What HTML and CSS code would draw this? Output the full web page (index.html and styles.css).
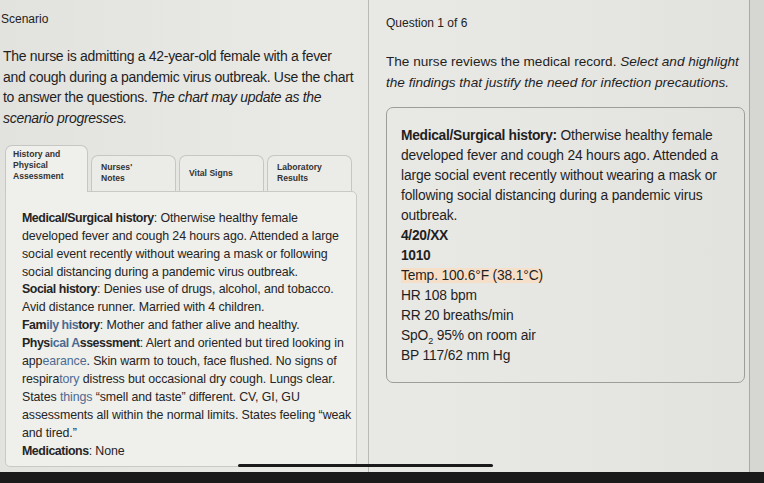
FILE: index.html
```html
<!DOCTYPE html>
<html>
<head>
<meta charset="utf-8">
<link rel="stylesheet" href="styles.css">
</head>
<body>
<div class="page">
  <section class="left">
    <div class="title">Scenario</div>
    <p class="intro">The nurse is admitting a 42-year-old female with a fever and cough during a pandemic virus outbreak. Use the chart to answer the questions. <em>The chart may update as the scenario progresses.</em></p>
    <div class="tabs">
      <div class="tab active">History and<br>Physical<br>Assessment</div>
      <div class="tab">Nurses'<br>Notes</div>
      <div class="tab">Vital Signs</div>
      <div class="tab">Laboratory<br>Results</div>
    </div>
    <div class="panel">
      <p><b>Medical/Surgical history</b>: Otherwise healthy female developed fever and cough 24 hours ago. Attended a large social event recently without wearing a mask or following social distancing during a pandemic virus outbreak.<br>
      <b>Social history</b>: Denies use of drugs, alcohol, and tobacco. Avid distance runner. Married with 4 children.<br>
      <b>Fam<span class="tint">ily his</span>tory</b>: Mother and father alive and healthy.<br>
      <b>Phys<span class="tint">ical A</span>ssessment</b>: Alert and oriented but tired looking in app<span class="tint">earance</span>. Skin warm to touch, face flushed. No signs of respira<span class="tint">tory</span> distress but occasional dry cough. Lungs clear. States <span class="tint">things</span> “smell and taste” different. CV, GI, GU assessments all within the normal limits. States feeling “weak and tired.”<br>
      <b>Medications</b>: None</p>
    </div>
  </section>
  <section class="right">
    <div class="title">Question 1 of 6</div>
    <p class="question">The nurse reviews the medical record. <em>Select and highlight the findings that justify the need for infection precautions.</em></p>
    <div class="record">
      <p><b>Medical/Surgical history:</b> Otherwise healthy female developed fever and cough 24 hours ago. Attended a large social event recently without wearing a mask or following social distancing during a pandemic virus outbreak.</p>
      <p><b>4/20/XX</b></p>
      <p><b>1010</b></p>
      <p><span class="hl">Temp. 100.6°F (38.1°C)</span></p>
      <p>HR 108 bpm</p>
      <p>RR 20 breaths/min</p>
      <p>SpO<sub>2</sub> 95% on room air</p>
      <p>BP 117/62 mm Hg</p>
    </div>
  </section>
  <div class="edge"></div>
</div>
<div class="bezel"></div>
<div class="scrollbar"></div>
</body>
</html>
```
FILE: styles.css
```css
html, body {
  margin: 0;
  padding: 0;
}
body {
  width: 764px;
  height: 483px;
  overflow: hidden;
  position: relative;
  background: #e3e3e0;
  font-family: "Liberation Sans", Arial, sans-serif;
  color: #1f1f1f;
}
.page {
  display: grid;
  grid-template-columns: 369px 381px 14px;
  height: 472px;
  background: linear-gradient(90deg, #e2e2df 0%, #e9e9e6 40%, #e6e6e3 75%, #e1e1de 100%);
}
.left {
  border-right: 1px solid #b9b9b6;
  padding: 12px 0 0 3px;
}
.title {
  font-size: 12px;
  line-height: 14px;
  color: #222;
}
.left .title {
  margin-left: -2px;
}
.intro {
  margin: 20px 0 0 0;
  font-size: 14px;
  letter-spacing: -0.3px;
  line-height: 20.7px;
  width: 354px;
}
.tabs {
  display: flex;
  align-items: flex-end;
  gap: 3px;
  margin-top: 16px;
  padding-left: 2px;
  position: relative;
  z-index: 1;
}
.tab {
  box-sizing: border-box;
  width: 85px;
  height: 36px;
  border: 1px solid #c6c6c3;
  border-bottom: none;
  border-radius: 7px 7px 0 0;
  background: #ebebe8;
  font-size: 8.6px;
  font-weight: bold;
  line-height: 11px;
  color: #333;
  padding: 0 0 0 9px;
  display: flex;
  align-items: center;
}
.tab.active {
  width: 83px;
  height: 47px;
  margin-bottom: -1px;
  background: #efefec;
  padding: 0 0 6px 7px;
}
.panel {
  box-sizing: border-box;
  margin-left: 2px;
  width: 352px;
  height: 276px;
  border: 1px solid #c9c9c6;
  border-radius: 0 5px 5px 5px;
  background: #efefec;
  padding: 18px 2px 0 16px;
}
.panel p {
  margin: 0;
  font-size: 12.4px;
  letter-spacing: -0.1px;
  line-height: 17.9px;
  color: #252525;
}
.panel b {
  letter-spacing: -0.45px;
}
.tint {
  color: #4b6b92;
}
.right {
  border-right: 1px solid #a9a9a6;
  padding: 16px 0 0 17px;
}
.question {
  margin: 22px 0 0 0;
  font-size: 13.6px;
  line-height: 20.5px;
  width: 362px;
}
.record {
  box-sizing: border-box;
  margin-top: 14px;
  width: 359px;
  height: 276px;
  border: 1px solid #9d9d9a;
  border-radius: 7px;
  padding: 18px 10px 0 14px;
}
.record p {
  margin: 0;
  font-size: 13.8px;
  letter-spacing: -0.15px;
  line-height: 20px;
}
.record b {
  letter-spacing: -0.3px;
}
.record sub {
  font-size: 9px;
  line-height: 0;
}
.hl {
  background: #f6dfc9;
}
.edge {
  background: #d6d6d3;
}
.bezel {
  height: 11px;
  background: #1b1a1a;
}
.scrollbar {
  position: absolute;
  left: 238px;
  top: 464px;
  width: 255px;
  height: 3px;
  border-radius: 2px;
  background: #1a1a1a;
}
```
